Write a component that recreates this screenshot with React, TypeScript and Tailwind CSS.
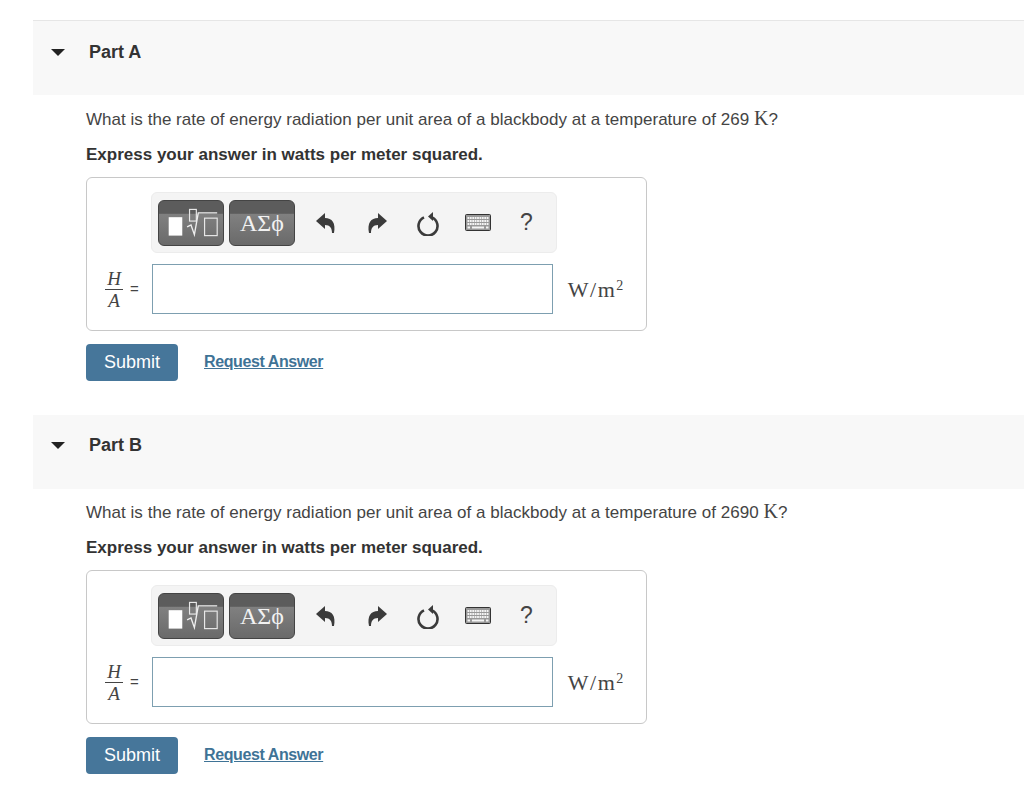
function UndoIcon({ flip = false }: { flip?: boolean }) {
  return (
    <svg viewBox="0 0 20 20" className={flip ? "w-5 h-5 -scale-x-100" : "w-5 h-5"} fill="#3b3b3b">
      <path d="M0 8 L9 0 V5 C16 5 20 10 18 20 H16 C16 15 14 12 9 12 V16 Z" />
    </svg>
  );
}

function RefreshIcon() {
  return (
    <svg viewBox="0 0 24 26" className="w-6 h-[26px]" fill="none" stroke="#3b3b3b" strokeWidth="2.6">
      <path d="M8 7.4 A9.5 9.5 0 1 0 16 7.4" />
      <path d="M17 2 L17 11 L12 6.5 Z" fill="#3b3b3b" stroke="none" />
    </svg>
  );
}

function KeyboardIcon() {
  return (
    <svg viewBox="0 0 26 17" className="w-[26px] h-[17px]">
      <rect x="0.5" y="0.5" width="25" height="16" rx="1" fill="#999" stroke="#333" />
      <path d="M2.5 4 H23.5 M2.5 7 H23.5 M2.5 10 H23.5" stroke="#f4f4f4" strokeWidth="2" strokeDasharray="1.8 0.6" />
      <path d="M2.5 13.5 H5 M7 13.5 H19 M21 13.5 H23.5" stroke="#f4f4f4" strokeWidth="2" />
    </svg>
  );
}

function Toolbar() {
  return (
    <div className="ml-[64px] w-[406px] h-[61px] rounded-md border border-[#ececec] bg-[#f4f4f4] flex items-center pl-[6px]">
      <div className="w-[66px] h-[46px] rounded-md border border-[#444] bg-[linear-gradient(#5c5c5c_0,#5c5c5c_28%,#808080_30%,#6a6a6a_100%)] flex items-center justify-center">
        <svg viewBox="0 0 66 46" className="w-[66px] h-[46px]" fill="none">
          <rect x="10" y="17" width="14" height="19" fill="#fff" />
          <rect x="31.5" y="9" width="7" height="12" stroke="#e8e8e8" strokeWidth="1.2" />
          <path d="M29 27 L33 25 L36.5 35 L40.5 12.5 H60" stroke="#eee" strokeWidth="1.4" />
          <rect x="47" y="18" width="13" height="18" stroke="#e8e8e8" strokeWidth="1.2" />
        </svg>
      </div>
      <div className="ml-[5px] w-[66px] h-[46px] rounded-md border border-[#444] bg-[linear-gradient(#5c5c5c_0,#5c5c5c_28%,#808080_30%,#6a6a6a_100%)] flex items-center justify-center font-['Liberation_Serif',serif] text-[24px] text-[#f2f2f2] leading-none">
        ΑΣϕ
      </div>
      <div className="ml-[21px] w-5 flex justify-center">
        <UndoIcon />
      </div>
      <div className="ml-[31px] w-5 flex justify-center">
        <UndoIcon flip />
      </div>
      <div className="ml-[29px] w-6 flex justify-center">
        <RefreshIcon />
      </div>
      <div className="ml-[25px] w-[26px] flex justify-center">
        <KeyboardIcon />
      </div>
      <div className="ml-[29px] text-[23px] leading-none text-[#444]">?</div>
    </div>
  );
}

function Part({ name, temp, first = false }: { name: string; temp: string; first?: boolean }) {
  return (
    <section>
      <div
        className={
          first
            ? "h-[75px] border-t border-[#e6e6e6] bg-[#f8f8f8] flex items-center pb-[12px]"
            : "h-[74px] bg-[#f8f8f8] flex items-center pb-[13px]"
        }
      >
        <div className="ml-[18px] w-0 h-0 border-x-[7px] border-x-transparent border-t-[7px] border-t-[#222]" />
        <h2 className="ml-[24px] text-[18px] font-bold text-[#333]">{name}</h2>
      </div>
      <div className="ml-[53px] w-[561px]">
        <p
          className={
            first
              ? "mt-[13px] h-6 leading-6 text-[17px] tracking-[0.03px] text-[#444] whitespace-nowrap"
              : "mt-[12px] h-6 leading-6 text-[17px] tracking-[0.03px] text-[#444] whitespace-nowrap"
          }
        >
          What is the rate of energy radiation per unit area of a blackbody at a temperature of {temp}{" "}
          <span className="font-['Liberation_Serif',serif] text-[20px] leading-none">K</span>?
        </p>
        <p className="mt-[11px] h-6 leading-6 text-[17px] font-bold text-[#333] whitespace-nowrap">
          Express your answer in watts per meter squared.
        </p>
        <div className="mt-[10px] h-[154px] rounded-md border border-[#c8c8c8] pt-[14px]">
          <Toolbar />
          <div className="mt-[11px] flex items-center">
            <div className="ml-[18px] w-[18px] flex flex-col items-center font-['Liberation_Serif',serif] italic text-[19px] leading-[21px] text-[#444]">
              <span className="w-full text-center border-b border-[#444]">H</span>
              <span>A</span>
            </div>
            <span className="ml-[7px] text-[15px] text-[#444]">=</span>
            <div className="ml-[13px] w-[401px] h-[50px] border border-[#7d9fb0] bg-white" />
            <span className="ml-[15px] font-['Liberation_Serif',serif] text-[22px] tracking-[1.5px] text-[#444] whitespace-nowrap">
              W/m<sup className="text-[14px]">2</sup>
            </span>
          </div>
        </div>
        <div className="mt-[13px] flex items-center">
          <button className="w-[92px] h-[37px] rounded-sm bg-[#46769a] text-white text-[18px]">Submit</button>
          <a className="ml-[26px] mb-[2px] text-[16px] font-bold text-[#3f7396] underline tracking-[-0.4px]">Request Answer</a>
        </div>
      </div>
    </section>
  );
}

export default function App() {
  return (
    <div className="pt-5 pl-[33px] bg-white h-[786px] overflow-hidden font-['Liberation_Sans',sans-serif]">
      <Part name="Part A" temp="269" first />
      <div className="h-[34px]" />
      <Part name="Part B" temp="2690" />
    </div>
  );
}
